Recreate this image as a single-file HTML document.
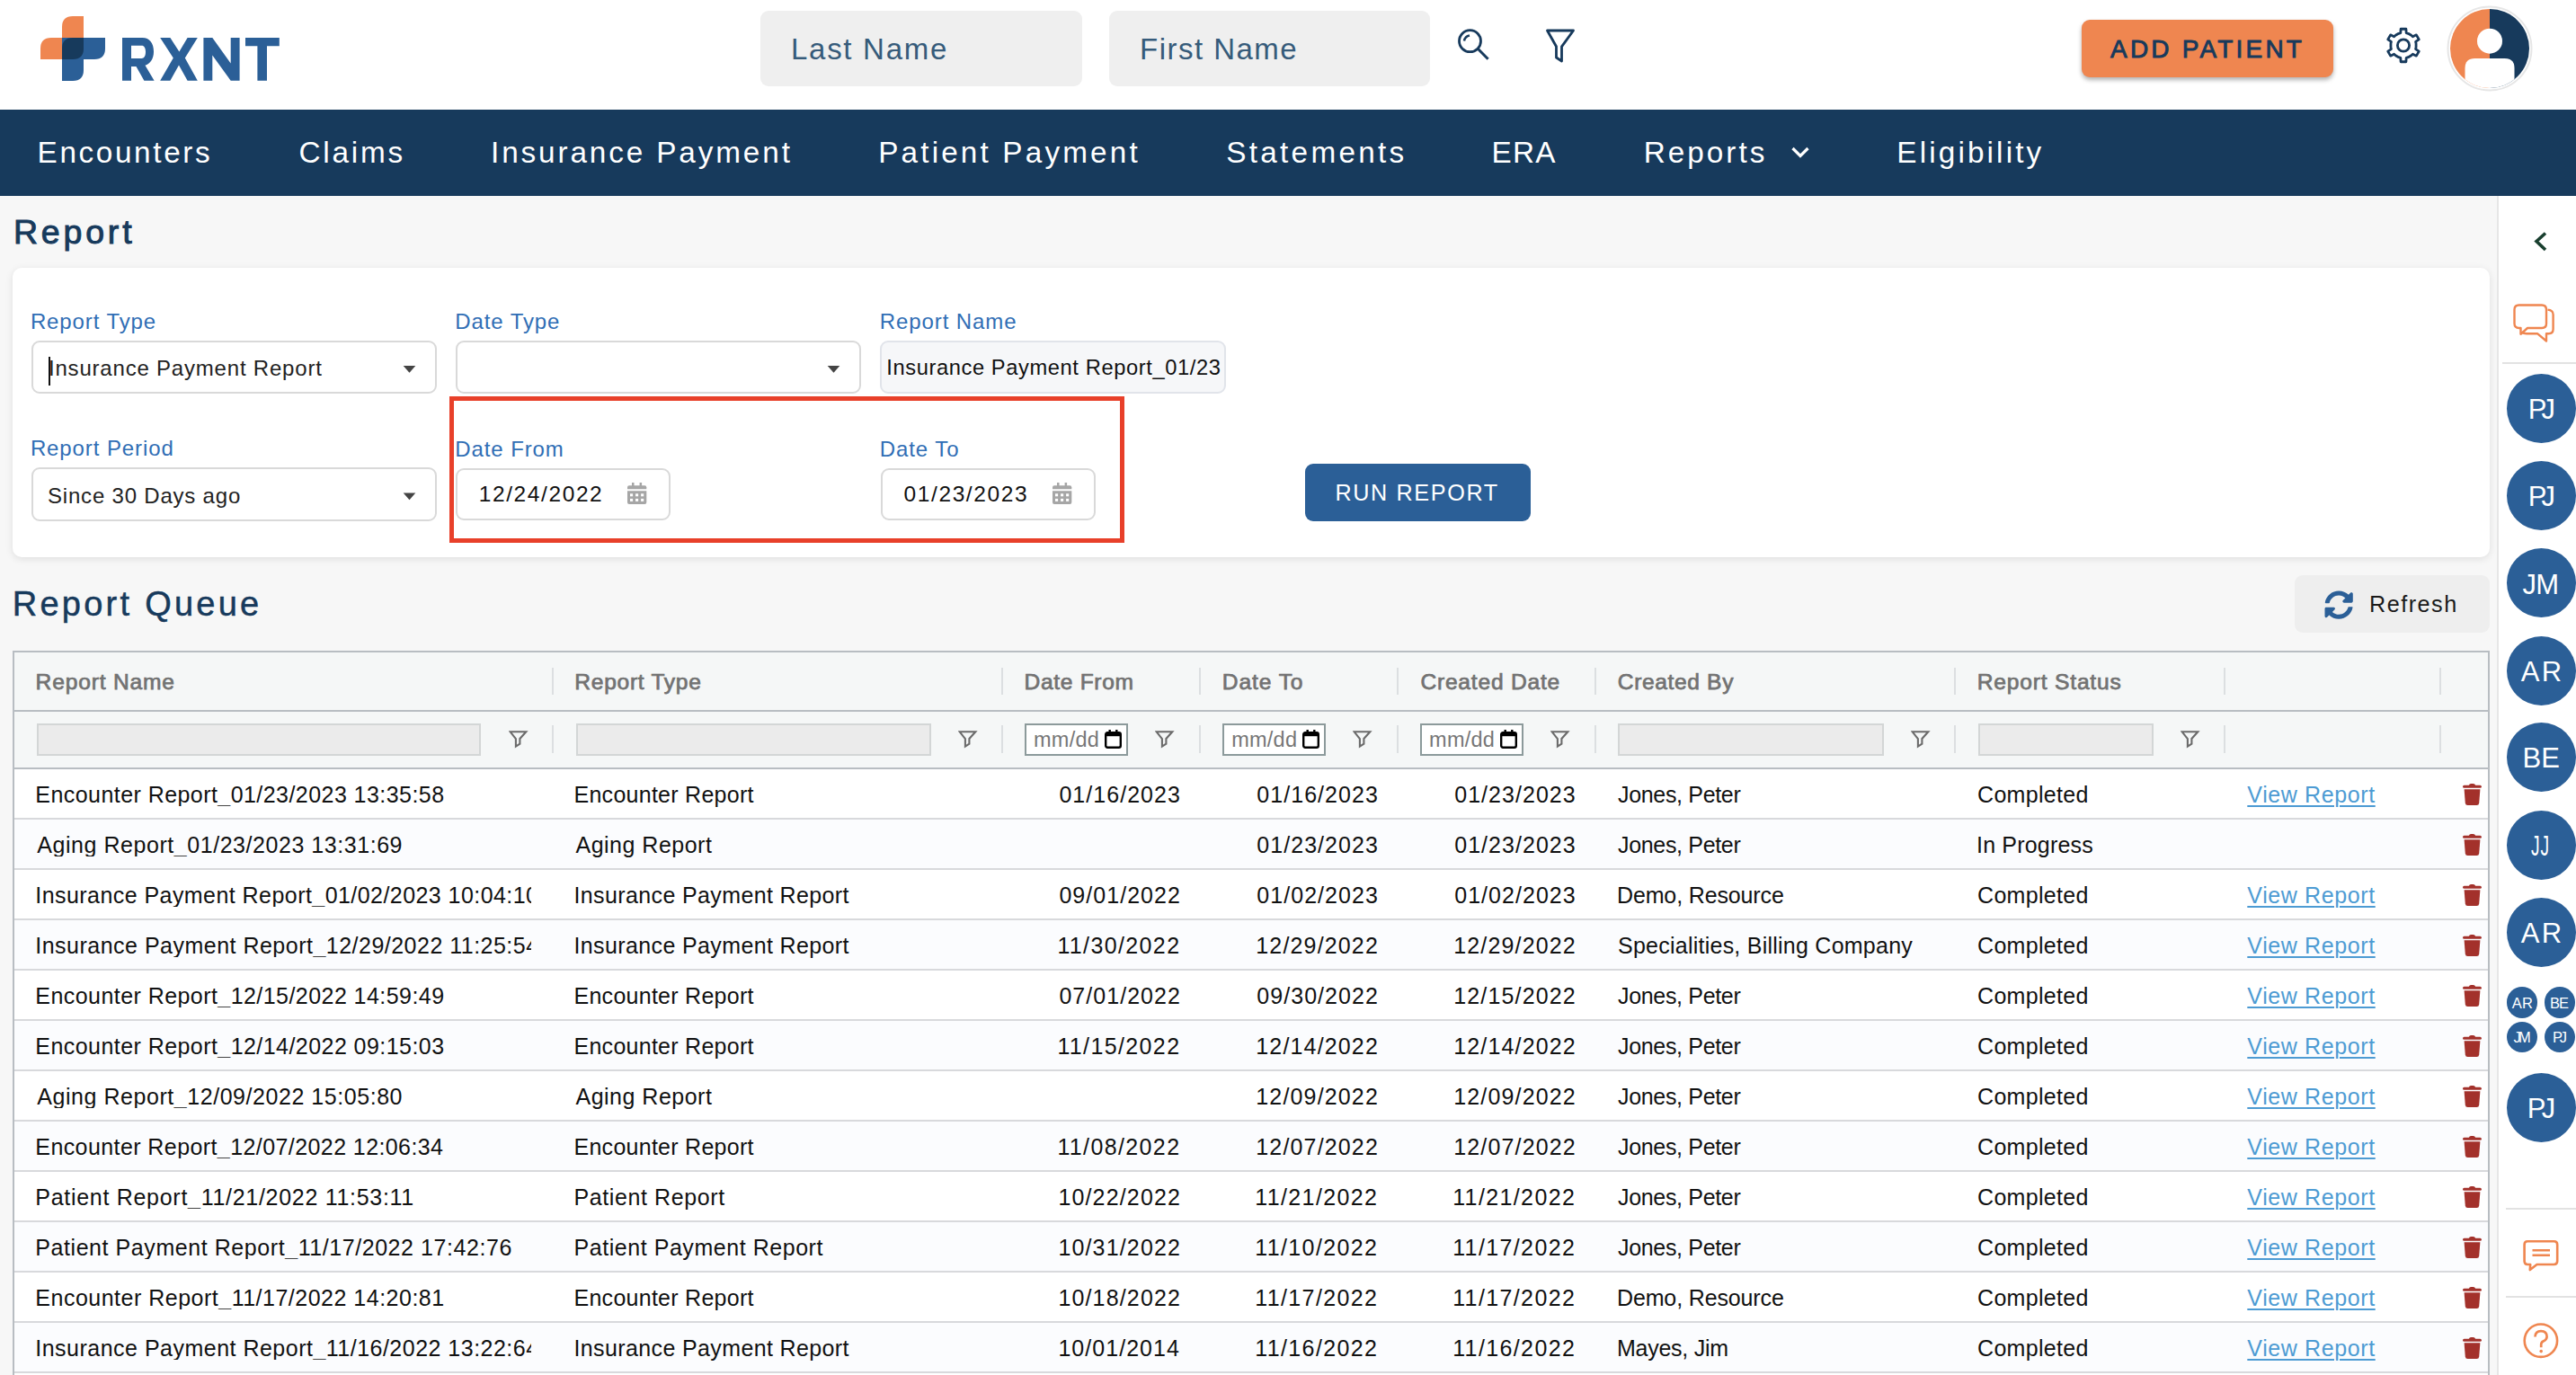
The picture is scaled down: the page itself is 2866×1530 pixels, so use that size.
<!DOCTYPE html>
<html><head><meta charset="utf-8"><style>
html,body{margin:0;padding:0}
body{width:2866px;height:1530px;overflow:hidden;position:relative;background:#f7f7f7;font-family:"Liberation Sans", sans-serif}
.t{position:absolute;white-space:pre;font-family:"Liberation Sans", sans-serif}
</style></head><body>
<div style="position:absolute;left:0px;top:0px;width:2866px;height:122px;background:#fff"></div>
<div style="position:absolute;left:846px;top:12px;width:358px;height:84px;background:#efefef;border-radius:9px"></div>
<div style="position:absolute;left:1234px;top:12px;width:357px;height:84px;background:#efefef;border-radius:9px"></div>
<div style="position:absolute;left:2316px;top:22px;width:280px;height:64px;background:#ef8650;border-radius:9px;box-shadow:0 3px 5px rgba(0,0,0,0.3)"></div>
<div style="position:absolute;left:0px;top:122px;width:2866px;height:96px;background:#173a5c"></div>
<div style="position:absolute;left:2778px;top:218px;width:88px;height:1312px;background:#fff;border-left:2px solid #e6e6e6;box-sizing:border-box"></div>
<div style="position:absolute;left:2784px;top:403px;width:82px;height:2px;background:#e2e2e2"></div>
<div style="position:absolute;left:2788px;top:1344px;width:78px;height:2px;background:#e2e2e2"></div>
<div style="position:absolute;left:2788px;top:1442px;width:78px;height:2px;background:#e2e2e2"></div>
<div style="position:absolute;left:14px;top:298px;width:2756px;height:322px;background:#fff;border-radius:10px;box-shadow:0 2px 9px rgba(0,0,0,0.1)"></div>
<div style="position:absolute;left:35px;top:379px;width:451px;height:59px;background:#fff;border:2px solid #d9d9d9;border-radius:9px;box-sizing:border-box"></div>
<div style="position:absolute;left:507px;top:379px;width:451px;height:59px;background:#fff;border:2px solid #d9d9d9;border-radius:9px;box-sizing:border-box"></div>
<div style="position:absolute;left:979.3px;top:378.5px;width:384.29999999999995px;height:59.0px;background:#f6f7f9;border:2px solid #e1e4ea;border-radius:9px;box-sizing:border-box"></div>
<div style="position:absolute;left:34.5px;top:519.5px;width:451.5px;height:60.0px;background:#fff;border:2px solid #d9d9d9;border-radius:9px;box-sizing:border-box"></div>
<div style="position:absolute;left:507px;top:520.5px;width:239px;height:58.799999999999955px;background:#fff;border:2px solid #d9d9d9;border-radius:9px;box-sizing:border-box"></div>
<div style="position:absolute;left:980px;top:520.5px;width:238.5999999999999px;height:58.799999999999955px;background:#fff;border:2px solid #d9d9d9;border-radius:9px;box-sizing:border-box"></div>
<div style="position:absolute;left:54px;top:397px;width:2px;height:32px;background:#111"></div>
<div style="position:absolute;left:500px;top:440.5px;width:751.2px;height:163.29999999999995px;border:5.2px solid #e8402a;box-sizing:border-box"></div>
<div style="position:absolute;left:1452px;top:516px;width:251px;height:64px;background:#2b5f97;border-radius:9px"></div>
<div style="position:absolute;left:2553px;top:640px;width:217px;height:64px;background:#eeeeee;border-radius:9px"></div>
<div style="position:absolute;left:14px;top:724px;width:2756px;height:876px;background:#fff;border:2px solid #b8bdc2;box-sizing:border-box"></div>
<div style="position:absolute;left:16px;top:726px;width:2752px;height:129px;background:#f5f7f7"></div>
<div style="position:absolute;left:16px;top:790px;width:2752px;height:2px;background:#b8bdc2"></div>
<div style="position:absolute;left:16px;top:854px;width:2752px;height:2px;background:#b8bdc2"></div>
<div style="position:absolute;left:16px;top:910px;width:2752px;height:2px;background:#d8d9dc"></div>
<div style="position:absolute;left:16px;top:912px;width:2752px;height:55px;background:#fbfcfe"></div>
<div style="position:absolute;left:16px;top:966px;width:2752px;height:2px;background:#d8d9dc"></div>
<div style="position:absolute;left:16px;top:1022px;width:2752px;height:2px;background:#d8d9dc"></div>
<div style="position:absolute;left:16px;top:1024px;width:2752px;height:55px;background:#fbfcfe"></div>
<div style="position:absolute;left:16px;top:1078px;width:2752px;height:2px;background:#d8d9dc"></div>
<div style="position:absolute;left:16px;top:1134px;width:2752px;height:2px;background:#d8d9dc"></div>
<div style="position:absolute;left:16px;top:1136px;width:2752px;height:55px;background:#fbfcfe"></div>
<div style="position:absolute;left:16px;top:1190px;width:2752px;height:2px;background:#d8d9dc"></div>
<div style="position:absolute;left:16px;top:1246px;width:2752px;height:2px;background:#d8d9dc"></div>
<div style="position:absolute;left:16px;top:1248px;width:2752px;height:55px;background:#fbfcfe"></div>
<div style="position:absolute;left:16px;top:1302px;width:2752px;height:2px;background:#d8d9dc"></div>
<div style="position:absolute;left:16px;top:1358px;width:2752px;height:2px;background:#d8d9dc"></div>
<div style="position:absolute;left:16px;top:1360px;width:2752px;height:55px;background:#fbfcfe"></div>
<div style="position:absolute;left:16px;top:1414px;width:2752px;height:2px;background:#d8d9dc"></div>
<div style="position:absolute;left:16px;top:1470px;width:2752px;height:2px;background:#d8d9dc"></div>
<div style="position:absolute;left:16px;top:1472px;width:2752px;height:55px;background:#fbfcfe"></div>
<div style="position:absolute;left:16px;top:1526px;width:2752px;height:2px;background:#d8d9dc"></div>
<div style="position:absolute;left:614px;top:743px;width:2px;height:30px;background:#dcdfe1"></div>
<div style="position:absolute;left:614px;top:807px;width:2px;height:31px;background:#dcdfe1"></div>
<div style="position:absolute;left:1114px;top:743px;width:2px;height:30px;background:#dcdfe1"></div>
<div style="position:absolute;left:1114px;top:807px;width:2px;height:31px;background:#dcdfe1"></div>
<div style="position:absolute;left:1334px;top:743px;width:2px;height:30px;background:#dcdfe1"></div>
<div style="position:absolute;left:1334px;top:807px;width:2px;height:31px;background:#dcdfe1"></div>
<div style="position:absolute;left:1554px;top:743px;width:2px;height:30px;background:#dcdfe1"></div>
<div style="position:absolute;left:1554px;top:807px;width:2px;height:31px;background:#dcdfe1"></div>
<div style="position:absolute;left:1774px;top:743px;width:2px;height:30px;background:#dcdfe1"></div>
<div style="position:absolute;left:1774px;top:807px;width:2px;height:31px;background:#dcdfe1"></div>
<div style="position:absolute;left:2174px;top:743px;width:2px;height:30px;background:#dcdfe1"></div>
<div style="position:absolute;left:2174px;top:807px;width:2px;height:31px;background:#dcdfe1"></div>
<div style="position:absolute;left:2474px;top:743px;width:2px;height:30px;background:#dcdfe1"></div>
<div style="position:absolute;left:2474px;top:807px;width:2px;height:31px;background:#dcdfe1"></div>
<div style="position:absolute;left:2714px;top:743px;width:2px;height:30px;background:#dcdfe1"></div>
<div style="position:absolute;left:2714px;top:807px;width:2px;height:31px;background:#dcdfe1"></div>
<div style="position:absolute;left:40.8px;top:805px;width:494.7px;height:36px;background:#ebebeb;border:2px solid #d3d6d6;box-sizing:border-box"></div>
<div style="position:absolute;left:640.5px;top:805px;width:395.0999999999999px;height:36px;background:#ebebeb;border:2px solid #d3d6d6;box-sizing:border-box"></div>
<div style="position:absolute;left:1800.3px;top:805px;width:295.39999999999986px;height:36px;background:#ebebeb;border:2px solid #d3d6d6;box-sizing:border-box"></div>
<div style="position:absolute;left:2200.5px;top:805px;width:195.0px;height:36px;background:#ebebeb;border:2px solid #d3d6d6;box-sizing:border-box"></div>
<div style="position:absolute;left:1140px;top:805px;width:115.20000000000005px;height:36px;background:#fff;border:2px solid #8c9a9b;box-sizing:border-box"></div>
<div style="position:absolute;left:1360.2px;top:805px;width:115.20000000000005px;height:36px;background:#fff;border:2px solid #8c9a9b;box-sizing:border-box"></div>
<div style="position:absolute;left:1580.1px;top:805px;width:115.20000000000005px;height:36px;background:#fff;border:2px solid #8c9a9b;box-sizing:border-box"></div>
<svg style="position:absolute;left:0;top:0" width="340" height="110" viewBox="0 0 340 110">
<path d="M69,30 Q69,18 81,18 L93,18 L93,66 L45,66 L45,54 Q45,42 57,42 L69,42 Z" fill="#ef8650"/>
<path d="M69,42 L117,42 L117,54 Q117,66 105,66 L93,66 L93,78 Q93,90 81,90 L69,90 Z" fill="#2b5f97"/>
<path d="M81,42 L93,42 L93,54 Q93,66 81,66 L69,66 L69,54 Q69,42 81,42 Z" fill="#173a5c"/>
<path fill-rule="evenodd" fill="#2b5f97" d="M136,42 L158.5,42 C166.5,42 171,48 171,57.5 C171,65.5 167,71 161.5,72.8 L171.6,89.8 L160.4,89.8 L151.5,74 L146,74 L146,89.8 L136,89.8 Z M146,50.8 L157.5,50.8 C160.5,50.8 162,53.5 162,57.8 C162,62 160.5,65 157.5,65 L146,65 Z"/>
<path fill="#2b5f97" d="M178.2,42 L189.4,42 L199.4,57.5 L208.6,42 L219.8,42 L205.8,64.5 L219.8,89.8 L208.6,89.8 L199,72.5 L189.4,89.8 L178.2,89.8 L192.8,64.5 Z"/>
<path fill="#2b5f97" d="M226.4,42 L236.3,42 L256.7,70.5 L256.7,42 L266.6,42 L266.6,89.8 L256.7,89.8 L236.3,61.5 L236.3,89.8 L226.4,89.8 Z"/>
<path fill="#2b5f97" d="M273,42 L310.8,42 L310.8,51.2 L297,51.2 L297,89.8 L286.4,89.8 L286.4,51.2 L273,51.2 Z"/>
</svg><svg style="position:absolute;left:1600px;top:20px" width="180" height="70" viewBox="0 0 180 70">
<circle cx="35.5" cy="25.7" r="12" fill="none" stroke="#173a5c" stroke-width="2.8"/>
<path d="M44.5,34.5 L55.6,45.8" stroke="#173a5c" stroke-width="3" fill="none"/>
<path d="M29,25.5 A7.5,7.5 0 0 1 35,19.5" stroke="#173a5c" stroke-width="2.5" fill="none"/>
<path d="M121.5,14 L150.5,14 L137.5,31.8 L137.5,48 L131.5,44 L131.5,31.8 Z" fill="none" stroke="#173a5c" stroke-width="2.8" stroke-linejoin="round"/>
</svg><svg style="position:absolute;left:2650px;top:26px" width="48" height="48" viewBox="0 0 48 48">
<path d="M18.68,11.33 L20.81,10.66 L21.11,6.23 L26.89,6.23 L27.19,10.66 L29.32,11.33 L32.74,13.31 L34.39,14.82 L38.38,12.86 L41.27,17.87 L37.58,20.35 L38.06,22.52 L38.06,26.48 L37.58,28.65 L41.27,31.13 L38.38,36.14 L34.39,34.18 L32.74,35.69 L29.32,37.67 L27.19,38.34 L26.89,42.77 L21.11,42.77 L20.81,38.34 L18.68,37.67 L15.26,35.69 L13.61,34.18 L9.62,36.14 L6.73,31.13 L10.42,28.65 L9.94,26.48 L9.94,22.52 L10.42,20.35 L6.73,17.87 L9.62,12.86 L13.61,14.82 L15.26,13.31 Z" fill="none" stroke="#173a5c" stroke-width="2.8" stroke-linejoin="round"/>
<circle cx="24" cy="24.5" r="6.6" fill="none" stroke="#173a5c" stroke-width="2.8"/>
</svg><svg style="position:absolute;left:2720px;top:4px" width="100" height="100" viewBox="0 0 100 100">
<defs><clipPath id="av"><circle cx="50" cy="50" r="44"/></clipPath></defs>
<circle cx="50" cy="50" r="46.5" fill="none" stroke="#e6e6e6" stroke-width="2"/>
<g clip-path="url(#av)">
<rect x="0" y="0" width="50" height="100" fill="#ef8650"/>
<rect x="50" y="0" width="50" height="100" fill="#173a5c"/>
<circle cx="50" cy="41.7" r="14" fill="#fff"/>
<path d="M22.5,100 L22.5,72 Q22.5,61 33.5,61 L66.5,61 Q77.5,61 77.5,72 L77.5,100 Z" fill="#fff"/>
</g></svg><svg style="position:absolute;left:1990px;top:160px" width="28" height="22" viewBox="0 0 28 22">
<path d="M4.5,5 L13,13.5 L21.5,5" fill="none" stroke="#fff" stroke-width="3.2"/>
</svg><svg style="position:absolute;left:2810px;top:250px" width="30" height="36" viewBox="0 0 30 36">
<path d="M22,9.5 L12,18.5 L22,28" fill="none" stroke="#193f2f" stroke-width="3.6"/>
</svg><svg style="position:absolute;left:2790px;top:332px" width="60" height="56" viewBox="0 0 60 56">
<path d="M12.5,7.45 L38,7.45 Q43,7.45 43,12.45 L43,28 Q43,33 38,33 L22,33 L14.5,39.8 L14.5,33 L12.5,33 Q7.5,33 7.5,28 L7.5,12.45 Q7.5,7.45 12.5,7.45 Z" fill="none" stroke="#ef8650" stroke-width="2.4" stroke-linejoin="round"/>
<path d="M44.5,12.6 Q50.6,13 50.6,18 L50.6,34.2 Q50.6,39.2 45.6,39.2 L43,39.2 L43,47.5 L33,39.2 L21,39.2 Q17.5,39.2 15.5,37.5" fill="none" stroke="#ef8650" stroke-width="2.4" stroke-linejoin="round"/>
</svg><svg style="position:absolute;left:2800px;top:1372px" width="54" height="48" viewBox="0 0 54 48">
<path d="M12,9.3 L41.5,9.3 Q45.2,9.3 45.2,13 L45.2,31.3 Q45.2,35 41.5,35 L22.5,35 L14.8,41 L15.2,35 L12,35 Q8.6,35 8.6,31.3 L8.6,13 Q8.6,9.3 12,9.3 Z" fill="none" stroke="#ef8650" stroke-width="2.6" stroke-linejoin="round"/>
<path d="M17.5,19.2 L37,19.2 M17.5,24.7 L37,24.7" stroke="#ef8650" stroke-width="2.6"/>
</svg><svg style="position:absolute;left:2800px;top:1465px" width="54" height="54" viewBox="0 0 54 54">
<circle cx="26.9" cy="26.7" r="18.2" fill="none" stroke="#ef8650" stroke-width="2.6"/>
<path d="M20.5,22.5 Q20.8,16.2 27,16.2 Q33.6,16.2 33.6,22.5 Q33.6,25.5 29.5,27.5 Q27.2,28.6 27.2,31 L27.2,34.2" fill="none" stroke="#ef8650" stroke-width="2.7"/>
<circle cx="27.2" cy="38.6" r="1.8" fill="#ef8650"/>
</svg><svg style="position:absolute;left:0;top:0" width="1000" height="600" viewBox="0 0 1000 600"><path d="M448.7,407 L462.3,407 L455.5,414.7 Z" fill="#444"/><path d="M920.7,407 L934.3,407 L927.5,414.7 Z" fill="#444"/><path d="M448.7,548.5 L462.3,548.5 L455.5,556.2 Z" fill="#444"/></svg><svg style="position:absolute;left:698.3px;top:537px" width="22" height="25" viewBox="0 0 22 25"><rect x="5" y="0" width="2.5" height="5" fill="#a6a6a6"/><rect x="13.6" y="0" width="2.5" height="5" fill="#a6a6a6"/><path d="M0,5.2 Q0,3.2 2,3.2 L19.3,3.2 Q21.3,3.2 21.3,5.2 L21.3,7.3 L0,7.3 Z" fill="#a6a6a6"/><path d="M0,9.3 L21.3,9.3 L21.3,22 Q21.3,24 19.3,24 L2,24 Q0,24 0,22 Z" fill="#a6a6a6"/><rect x="3.0" y="12.3" width="3.1" height="3" fill="#fff"/><rect x="9.05" y="12.3" width="3.1" height="3" fill="#fff"/><rect x="15.1" y="12.3" width="3.1" height="3" fill="#fff"/><rect x="3.0" y="17.9" width="3.1" height="3" fill="#fff"/><rect x="9.05" y="17.9" width="3.1" height="3" fill="#fff"/><rect x="15.1" y="17.9" width="3.1" height="3" fill="#fff"/></svg><svg style="position:absolute;left:1170.8px;top:537px" width="22" height="25" viewBox="0 0 22 25"><rect x="5" y="0" width="2.5" height="5" fill="#a6a6a6"/><rect x="13.6" y="0" width="2.5" height="5" fill="#a6a6a6"/><path d="M0,5.2 Q0,3.2 2,3.2 L19.3,3.2 Q21.3,3.2 21.3,5.2 L21.3,7.3 L0,7.3 Z" fill="#a6a6a6"/><path d="M0,9.3 L21.3,9.3 L21.3,22 Q21.3,24 19.3,24 L2,24 Q0,24 0,22 Z" fill="#a6a6a6"/><rect x="3.0" y="12.3" width="3.1" height="3" fill="#fff"/><rect x="9.05" y="12.3" width="3.1" height="3" fill="#fff"/><rect x="15.1" y="12.3" width="3.1" height="3" fill="#fff"/><rect x="3.0" y="17.9" width="3.1" height="3" fill="#fff"/><rect x="9.05" y="17.9" width="3.1" height="3" fill="#fff"/><rect x="15.1" y="17.9" width="3.1" height="3" fill="#fff"/></svg><svg style="position:absolute;left:1228.7px;top:812px" width="19" height="21" viewBox="0 0 19 21"><rect x="1.2" y="3.2" width="16.6" height="16.6" rx="2" fill="none" stroke="#000" stroke-width="2.4"/><rect x="1.2" y="3.2" width="16.6" height="4" fill="#000"/><rect x="4.5" y="0" width="2.4" height="4" fill="#000"/><rect x="12.1" y="0" width="2.4" height="4" fill="#000"/></svg><svg style="position:absolute;left:1448.9px;top:812px" width="19" height="21" viewBox="0 0 19 21"><rect x="1.2" y="3.2" width="16.6" height="16.6" rx="2" fill="none" stroke="#000" stroke-width="2.4"/><rect x="1.2" y="3.2" width="16.6" height="4" fill="#000"/><rect x="4.5" y="0" width="2.4" height="4" fill="#000"/><rect x="12.1" y="0" width="2.4" height="4" fill="#000"/></svg><svg style="position:absolute;left:1668.8px;top:812px" width="19" height="21" viewBox="0 0 19 21"><rect x="1.2" y="3.2" width="16.6" height="16.6" rx="2" fill="none" stroke="#000" stroke-width="2.4"/><rect x="1.2" y="3.2" width="16.6" height="4" fill="#000"/><rect x="4.5" y="0" width="2.4" height="4" fill="#000"/><rect x="12.1" y="0" width="2.4" height="4" fill="#000"/></svg><svg style="position:absolute;left:565.5px;top:812px" width="22" height="22" viewBox="0 0 22 22"><path d="M1.7,2.3 L19.3,2.3 L12.4,10 L12.4,15.6 L7.9,18.6 L7.9,10 Z" fill="none" stroke="#6b6b6b" stroke-width="2.1" stroke-linejoin="miter" stroke-miterlimit="3"/></svg><svg style="position:absolute;left:1065.5px;top:812px" width="22" height="22" viewBox="0 0 22 22"><path d="M1.7,2.3 L19.3,2.3 L12.4,10 L12.4,15.6 L7.9,18.6 L7.9,10 Z" fill="none" stroke="#6b6b6b" stroke-width="2.1" stroke-linejoin="miter" stroke-miterlimit="3"/></svg><svg style="position:absolute;left:1285.0px;top:812px" width="22" height="22" viewBox="0 0 22 22"><path d="M1.7,2.3 L19.3,2.3 L12.4,10 L12.4,15.6 L7.9,18.6 L7.9,10 Z" fill="none" stroke="#6b6b6b" stroke-width="2.1" stroke-linejoin="miter" stroke-miterlimit="3"/></svg><svg style="position:absolute;left:1505.0px;top:812px" width="22" height="22" viewBox="0 0 22 22"><path d="M1.7,2.3 L19.3,2.3 L12.4,10 L12.4,15.6 L7.9,18.6 L7.9,10 Z" fill="none" stroke="#6b6b6b" stroke-width="2.1" stroke-linejoin="miter" stroke-miterlimit="3"/></svg><svg style="position:absolute;left:1725.0px;top:812px" width="22" height="22" viewBox="0 0 22 22"><path d="M1.7,2.3 L19.3,2.3 L12.4,10 L12.4,15.6 L7.9,18.6 L7.9,10 Z" fill="none" stroke="#6b6b6b" stroke-width="2.1" stroke-linejoin="miter" stroke-miterlimit="3"/></svg><svg style="position:absolute;left:2125.5px;top:812px" width="22" height="22" viewBox="0 0 22 22"><path d="M1.7,2.3 L19.3,2.3 L12.4,10 L12.4,15.6 L7.9,18.6 L7.9,10 Z" fill="none" stroke="#6b6b6b" stroke-width="2.1" stroke-linejoin="miter" stroke-miterlimit="3"/></svg><svg style="position:absolute;left:2425.5px;top:812px" width="22" height="22" viewBox="0 0 22 22"><path d="M1.7,2.3 L19.3,2.3 L12.4,10 L12.4,15.6 L7.9,18.6 L7.9,10 Z" fill="none" stroke="#6b6b6b" stroke-width="2.1" stroke-linejoin="miter" stroke-miterlimit="3"/></svg><svg style="position:absolute;left:2740px;top:871.8px" width="22" height="25" viewBox="0 0 22 25"><path d="M6.6,2.2 Q7.4,0.1 9.2,0.1 L11.7,0.1 Q13.5,0.1 14.3,2.2 Z" fill="#a3312b"/><rect x="0" y="1.7" width="20.9" height="3.1" rx="1.5" fill="#a3312b"/><path d="M1.6,6.3 L19.4,6.3 L18.2,21.5 Q18,24 15.5,24 L5.5,24 Q3,24 2.8,21.5 Z" fill="#a3312b"/></svg><svg style="position:absolute;left:2740px;top:927.8px" width="22" height="25" viewBox="0 0 22 25"><path d="M6.6,2.2 Q7.4,0.1 9.2,0.1 L11.7,0.1 Q13.5,0.1 14.3,2.2 Z" fill="#a3312b"/><rect x="0" y="1.7" width="20.9" height="3.1" rx="1.5" fill="#a3312b"/><path d="M1.6,6.3 L19.4,6.3 L18.2,21.5 Q18,24 15.5,24 L5.5,24 Q3,24 2.8,21.5 Z" fill="#a3312b"/></svg><svg style="position:absolute;left:2740px;top:983.8px" width="22" height="25" viewBox="0 0 22 25"><path d="M6.6,2.2 Q7.4,0.1 9.2,0.1 L11.7,0.1 Q13.5,0.1 14.3,2.2 Z" fill="#a3312b"/><rect x="0" y="1.7" width="20.9" height="3.1" rx="1.5" fill="#a3312b"/><path d="M1.6,6.3 L19.4,6.3 L18.2,21.5 Q18,24 15.5,24 L5.5,24 Q3,24 2.8,21.5 Z" fill="#a3312b"/></svg><svg style="position:absolute;left:2740px;top:1039.8px" width="22" height="25" viewBox="0 0 22 25"><path d="M6.6,2.2 Q7.4,0.1 9.2,0.1 L11.7,0.1 Q13.5,0.1 14.3,2.2 Z" fill="#a3312b"/><rect x="0" y="1.7" width="20.9" height="3.1" rx="1.5" fill="#a3312b"/><path d="M1.6,6.3 L19.4,6.3 L18.2,21.5 Q18,24 15.5,24 L5.5,24 Q3,24 2.8,21.5 Z" fill="#a3312b"/></svg><svg style="position:absolute;left:2740px;top:1095.8px" width="22" height="25" viewBox="0 0 22 25"><path d="M6.6,2.2 Q7.4,0.1 9.2,0.1 L11.7,0.1 Q13.5,0.1 14.3,2.2 Z" fill="#a3312b"/><rect x="0" y="1.7" width="20.9" height="3.1" rx="1.5" fill="#a3312b"/><path d="M1.6,6.3 L19.4,6.3 L18.2,21.5 Q18,24 15.5,24 L5.5,24 Q3,24 2.8,21.5 Z" fill="#a3312b"/></svg><svg style="position:absolute;left:2740px;top:1151.8px" width="22" height="25" viewBox="0 0 22 25"><path d="M6.6,2.2 Q7.4,0.1 9.2,0.1 L11.7,0.1 Q13.5,0.1 14.3,2.2 Z" fill="#a3312b"/><rect x="0" y="1.7" width="20.9" height="3.1" rx="1.5" fill="#a3312b"/><path d="M1.6,6.3 L19.4,6.3 L18.2,21.5 Q18,24 15.5,24 L5.5,24 Q3,24 2.8,21.5 Z" fill="#a3312b"/></svg><svg style="position:absolute;left:2740px;top:1207.8px" width="22" height="25" viewBox="0 0 22 25"><path d="M6.6,2.2 Q7.4,0.1 9.2,0.1 L11.7,0.1 Q13.5,0.1 14.3,2.2 Z" fill="#a3312b"/><rect x="0" y="1.7" width="20.9" height="3.1" rx="1.5" fill="#a3312b"/><path d="M1.6,6.3 L19.4,6.3 L18.2,21.5 Q18,24 15.5,24 L5.5,24 Q3,24 2.8,21.5 Z" fill="#a3312b"/></svg><svg style="position:absolute;left:2740px;top:1263.8px" width="22" height="25" viewBox="0 0 22 25"><path d="M6.6,2.2 Q7.4,0.1 9.2,0.1 L11.7,0.1 Q13.5,0.1 14.3,2.2 Z" fill="#a3312b"/><rect x="0" y="1.7" width="20.9" height="3.1" rx="1.5" fill="#a3312b"/><path d="M1.6,6.3 L19.4,6.3 L18.2,21.5 Q18,24 15.5,24 L5.5,24 Q3,24 2.8,21.5 Z" fill="#a3312b"/></svg><svg style="position:absolute;left:2740px;top:1319.8px" width="22" height="25" viewBox="0 0 22 25"><path d="M6.6,2.2 Q7.4,0.1 9.2,0.1 L11.7,0.1 Q13.5,0.1 14.3,2.2 Z" fill="#a3312b"/><rect x="0" y="1.7" width="20.9" height="3.1" rx="1.5" fill="#a3312b"/><path d="M1.6,6.3 L19.4,6.3 L18.2,21.5 Q18,24 15.5,24 L5.5,24 Q3,24 2.8,21.5 Z" fill="#a3312b"/></svg><svg style="position:absolute;left:2740px;top:1375.8px" width="22" height="25" viewBox="0 0 22 25"><path d="M6.6,2.2 Q7.4,0.1 9.2,0.1 L11.7,0.1 Q13.5,0.1 14.3,2.2 Z" fill="#a3312b"/><rect x="0" y="1.7" width="20.9" height="3.1" rx="1.5" fill="#a3312b"/><path d="M1.6,6.3 L19.4,6.3 L18.2,21.5 Q18,24 15.5,24 L5.5,24 Q3,24 2.8,21.5 Z" fill="#a3312b"/></svg><svg style="position:absolute;left:2740px;top:1431.8px" width="22" height="25" viewBox="0 0 22 25"><path d="M6.6,2.2 Q7.4,0.1 9.2,0.1 L11.7,0.1 Q13.5,0.1 14.3,2.2 Z" fill="#a3312b"/><rect x="0" y="1.7" width="20.9" height="3.1" rx="1.5" fill="#a3312b"/><path d="M1.6,6.3 L19.4,6.3 L18.2,21.5 Q18,24 15.5,24 L5.5,24 Q3,24 2.8,21.5 Z" fill="#a3312b"/></svg><svg style="position:absolute;left:2740px;top:1487.8px" width="22" height="25" viewBox="0 0 22 25"><path d="M6.6,2.2 Q7.4,0.1 9.2,0.1 L11.7,0.1 Q13.5,0.1 14.3,2.2 Z" fill="#a3312b"/><rect x="0" y="1.7" width="20.9" height="3.1" rx="1.5" fill="#a3312b"/><path d="M1.6,6.3 L19.4,6.3 L18.2,21.5 Q18,24 15.5,24 L5.5,24 Q3,24 2.8,21.5 Z" fill="#a3312b"/></svg><svg style="position:absolute;left:2585.7px;top:656.5px" width="32.3" height="32.3" viewBox="0 0 512 512">
<path fill="#2b5f97" d="M370.72 133.28C339.458 104.008 298.888 87.962 255.848 88c-77.458.068-144.328 53.178-162.791 126.85-1.344 5.363-6.122 9.15-11.651 9.15H24.103c-7.498 0-13.194-6.807-11.807-14.176C33.933 94.924 134.813 8 256 8c66.448 0 126.791 26.136 171.315 68.685L463.03 40.97C478.149 25.851 504 36.559 504 57.941V192c0 13.255-10.745 24-24 24H345.941c-21.382 0-32.090-25.851-16.971-40.971l41.75-41.749zM32 296h134.059c21.382 0 32.090 25.851 16.971 40.971l-41.75 41.750c31.262 29.273 71.835 45.319 114.876 45.280 77.418-.07 144.315-53.144 162.787-126.849 1.344-5.363 6.122-9.150 11.651-9.150h57.304c7.498 0 13.194 6.807 11.807 14.176C478.067 417.076 377.187 504 256 504c-66.448 0-126.791-26.136-171.315-68.685L48.970 471.030C33.851 486.149 8 475.441 8 454.059V320c0-13.255 10.745-24 24-24z"/>
</svg>
<div style="position:absolute;left:2789.0px;top:415.8px;width:77.0px;height:77.0px;border-radius:50%;background:#2b5f97"></div><div style="position:absolute;left:2789.0px;top:512.9px;width:77.0px;height:77.0px;border-radius:50%;background:#2b5f97"></div><div style="position:absolute;left:2789.0px;top:610.3px;width:77.0px;height:77.0px;border-radius:50%;background:#2b5f97"></div><div style="position:absolute;left:2789.0px;top:707.5px;width:77.0px;height:77.0px;border-radius:50%;background:#2b5f97"></div><div style="position:absolute;left:2789.0px;top:804.2px;width:77.0px;height:77.0px;border-radius:50%;background:#2b5f97"></div><div style="position:absolute;left:2789.0px;top:902.0px;width:77.0px;height:77.0px;border-radius:50%;background:#2b5f97"></div><div style="position:absolute;left:2789.0px;top:999.2px;width:77.0px;height:77.0px;border-radius:50%;background:#2b5f97"></div><div style="position:absolute;left:2789.0px;top:1193.7px;width:77.0px;height:77.0px;border-radius:50%;background:#2b5f97"></div><div style="position:absolute;left:2788.8px;top:1098.2px;width:34.4px;height:34.4px;border-radius:50%;background:#2b5f97"></div><div style="position:absolute;left:2830.8px;top:1098.2px;width:34.4px;height:34.4px;border-radius:50%;background:#2b5f97"></div><div style="position:absolute;left:2788.8px;top:1136.8999999999999px;width:34.4px;height:34.4px;border-radius:50%;background:#2b5f97"></div><div style="position:absolute;left:2830.8px;top:1136.8999999999999px;width:34.4px;height:34.4px;border-radius:50%;background:#2b5f97"></div>
<div class="t" style="left:880.00px;top:38.00px;font-size:33px;line-height:33px;font-weight:400;letter-spacing:1.713px;color:#365b7a">Last Name</div>
<div class="t" style="left:1268.00px;top:38.00px;font-size:33px;line-height:33px;font-weight:400;letter-spacing:1.478px;color:#365b7a">First Name</div>
<div class="t" style="left:2348.00px;top:41.00px;font-size:28px;line-height:28px;font-weight:400;letter-spacing:3.200px;color:#173a5c;-webkit-text-stroke:0.9px #173a5c">ADD PATIENT</div>
<div class="t" style="left:41.60px;top:152.80px;font-size:33.3px;line-height:33.3px;font-weight:400;letter-spacing:2.622px;color:#ffffff">Encounters</div>
<div class="t" style="left:332.50px;top:152.80px;font-size:33.3px;line-height:33.3px;font-weight:400;letter-spacing:2.800px;color:#ffffff">Claims</div>
<div class="t" style="left:546.00px;top:152.80px;font-size:33.3px;line-height:33.3px;font-weight:400;letter-spacing:2.875px;color:#ffffff">Insurance Payment</div>
<div class="t" style="left:977.20px;top:152.80px;font-size:33.3px;line-height:33.3px;font-weight:400;letter-spacing:3.157px;color:#ffffff">Patient Payment</div>
<div class="t" style="left:1364.30px;top:152.80px;font-size:33.3px;line-height:33.3px;font-weight:400;letter-spacing:3.267px;color:#ffffff">Statements</div>
<div class="t" style="left:1659.60px;top:152.80px;font-size:33.3px;line-height:33.3px;font-weight:400;letter-spacing:1.200px;color:#ffffff">ERA</div>
<div class="t" style="left:1828.80px;top:152.80px;font-size:33.3px;line-height:33.3px;font-weight:400;letter-spacing:2.983px;color:#ffffff">Reports</div>
<div class="t" style="left:2110.30px;top:152.80px;font-size:33.3px;line-height:33.3px;font-weight:400;letter-spacing:3.140px;color:#ffffff">Eligibility</div>
<div class="t" style="left:14.90px;top:240.30px;font-size:37.5px;line-height:37.5px;font-weight:400;letter-spacing:3.820px;color:#173a5c;-webkit-text-stroke:1px #173a5c">Report</div>
<div class="t" style="left:13.80px;top:653.20px;font-size:38px;line-height:38px;font-weight:400;letter-spacing:3.245px;color:#173a5c;-webkit-text-stroke:0.5px #173a5c">Report Queue</div>
<div class="t" style="left:33.90px;top:345.70px;font-size:24px;line-height:24px;font-weight:400;letter-spacing:0.900px;color:#306eb5">Report Type</div>
<div class="t" style="left:506.30px;top:345.70px;font-size:24px;line-height:24px;font-weight:400;letter-spacing:0.900px;color:#306eb5">Date Type</div>
<div class="t" style="left:978.80px;top:345.70px;font-size:24px;line-height:24px;font-weight:400;letter-spacing:0.900px;color:#306eb5">Report Name</div>
<div class="t" style="left:33.90px;top:487.30px;font-size:24px;line-height:24px;font-weight:400;letter-spacing:0.900px;color:#306eb5">Report Period</div>
<div class="t" style="left:506.30px;top:488.30px;font-size:24px;line-height:24px;font-weight:400;letter-spacing:0.900px;color:#306eb5">Date From</div>
<div class="t" style="left:978.80px;top:488.30px;font-size:24px;line-height:24px;font-weight:400;letter-spacing:0.900px;color:#306eb5">Date To</div>
<div class="t" style="left:54.00px;top:398.00px;font-size:24px;line-height:24px;font-weight:400;letter-spacing:0.800px;color:#222">Insurance Payment Report</div>
<div class="t" style="left:53.00px;top:539.50px;font-size:24px;line-height:24px;font-weight:400;letter-spacing:0.800px;color:#222">Since 30 Days ago</div>
<div class="t" style="left:986.30px;top:397.80px;font-size:23.7px;line-height:23.7px;font-weight:400;letter-spacing:0.597px;color:#111">Insurance Payment Report_01/23</div>
<div class="t" style="left:532.80px;top:537.90px;font-size:24.5px;line-height:24.5px;font-weight:400;letter-spacing:1.589px;color:#111">12/24/2022</div>
<div class="t" style="left:1005.50px;top:537.90px;font-size:24.5px;line-height:24.5px;font-weight:400;letter-spacing:1.611px;color:#111">01/23/2023</div>
<div class="t" style="left:1485.50px;top:536.30px;font-size:25.2px;line-height:25.2px;font-weight:400;letter-spacing:1.622px;color:#ffffff">RUN REPORT</div>
<div class="t" style="left:2636.00px;top:660.20px;font-size:25.2px;line-height:25.2px;font-weight:400;letter-spacing:1.500px;color:#1a1a1a">Refresh</div>
<div class="t" style="left:39.60px;top:747.20px;font-size:24.6px;line-height:24.6px;font-weight:400;letter-spacing:0.820px;color:#727272;-webkit-text-stroke:0.75px #727272">Report Name</div>
<div class="t" style="left:639.30px;top:747.20px;font-size:24.6px;line-height:24.6px;font-weight:400;letter-spacing:0.700px;color:#727272;-webkit-text-stroke:0.75px #727272">Report Type</div>
<div class="t" style="left:1139.60px;top:747.20px;font-size:24.6px;line-height:24.6px;font-weight:400;letter-spacing:0.650px;color:#727272;-webkit-text-stroke:0.75px #727272">Date From</div>
<div class="t" style="left:1359.80px;top:747.20px;font-size:24.6px;line-height:24.6px;font-weight:400;letter-spacing:0.900px;color:#727272;-webkit-text-stroke:0.75px #727272">Date To</div>
<div class="t" style="left:1580.40px;top:747.20px;font-size:24.6px;line-height:24.6px;font-weight:400;letter-spacing:0.782px;color:#727272;-webkit-text-stroke:0.75px #727272">Created Date</div>
<div class="t" style="left:1799.80px;top:747.20px;font-size:24.6px;line-height:24.6px;font-weight:400;letter-spacing:0.622px;color:#727272;-webkit-text-stroke:0.75px #727272">Created By</div>
<div class="t" style="left:2199.80px;top:747.20px;font-size:24.6px;line-height:24.6px;font-weight:400;letter-spacing:0.800px;color:#727272;-webkit-text-stroke:0.75px #727272">Report Status</div>
<div class="t" style="left:1150.00px;top:811.80px;font-size:23.5px;line-height:23.5px;font-weight:400;letter-spacing:0.250px;color:#777777">mm/dd</div>
<div class="t" style="left:1370.20px;top:811.80px;font-size:23.5px;line-height:23.5px;font-weight:400;letter-spacing:0.250px;color:#777777">mm/dd</div>
<div class="t" style="left:1590.10px;top:811.80px;font-size:23.5px;line-height:23.5px;font-weight:400;letter-spacing:0.250px;color:#777777">mm/dd</div>
<div class="t" style="left:2812.70px;top:440.00px;font-size:31px;line-height:31px;font-weight:400;letter-spacing:-5.800px;color:#ffffff">PJ</div>
<div class="t" style="left:2812.70px;top:537.10px;font-size:31px;line-height:31px;font-weight:400;letter-spacing:-5.800px;color:#ffffff">PJ</div>
<div class="t" style="left:2806.50px;top:634.50px;font-size:31px;line-height:31px;font-weight:400;letter-spacing:-0.800px;color:#ffffff">JM</div>
<div class="t" style="left:2804.70px;top:731.70px;font-size:31px;line-height:31px;font-weight:400;letter-spacing:2.300px;color:#ffffff">AR</div>
<div class="t" style="left:2806.40px;top:828.40px;font-size:31px;line-height:31px;font-weight:400;letter-spacing:0.300px;color:#ffffff">BE</div>
<div class="t" style="left:2816.30px;top:926.20px;font-size:31px;line-height:31px;font-weight:400;letter-spacing:1.500px;color:#ffffff;transform:scaleX(0.62);transform-origin:0 0">JJ</div>
<div class="t" style="left:2804.70px;top:1023.40px;font-size:31px;line-height:31px;font-weight:400;letter-spacing:2.300px;color:#ffffff">AR</div>
<div class="t" style="left:2811.70px;top:1217.90px;font-size:31px;line-height:31px;font-weight:400;letter-spacing:-4.600px;color:#ffffff">PJ</div>
<div class="t" style="left:2794.80px;top:1107.60px;font-size:16.5px;line-height:16.5px;font-weight:400;letter-spacing:0.100px;color:#ffffff">AR</div>
<div class="t" style="left:2837.00px;top:1107.60px;font-size:16.5px;line-height:16.5px;font-weight:400;letter-spacing:-1.000px;color:#ffffff">BE</div>
<div class="t" style="left:2796.40px;top:1146.30px;font-size:16.5px;line-height:16.5px;font-weight:400;letter-spacing:-2.600px;color:#ffffff">JM</div>
<div class="t" style="left:2840.10px;top:1146.30px;font-size:16.5px;line-height:16.5px;font-weight:400;letter-spacing:-3.300px;color:#ffffff">PJ</div>
<div class="t" style="left:39.30px;top:872.30px;font-size:25px;line-height:25px;font-weight:400;letter-spacing:0.443px;color:#111;width:551.70px;overflow:hidden">Encounter Report_01/23/2023 13:35:58</div>
<div class="t" style="left:638.50px;top:872.30px;font-size:25px;line-height:25px;font-weight:400;letter-spacing:0.267px;color:#111">Encounter Report</div>
<div class="t" style="left:1178.40px;top:872.30px;font-size:25px;line-height:25px;font-weight:400;letter-spacing:1.044px;color:#111">01/16/2023</div>
<div class="t" style="left:1398.30px;top:872.30px;font-size:25px;line-height:25px;font-weight:400;letter-spacing:1.044px;color:#111">01/16/2023</div>
<div class="t" style="left:1618.20px;top:872.30px;font-size:25px;line-height:25px;font-weight:400;letter-spacing:1.044px;color:#111">01/23/2023</div>
<div class="t" style="left:1800.00px;top:872.30px;font-size:25px;line-height:25px;font-weight:400;letter-spacing:-0.327px;color:#111">Jones, Peter</div>
<div class="t" style="left:2200.00px;top:872.30px;font-size:25px;line-height:25px;font-weight:400;letter-spacing:0.325px;color:#111">Completed</div>
<div class="t" style="left:2500.30px;top:872.30px;font-size:25px;line-height:25px;font-weight:400;letter-spacing:0.610px;color:#4d9bd3;text-decoration:underline;text-decoration-thickness:2px;text-underline-offset:3px">View Report</div>
<div class="t" style="left:41.30px;top:928.30px;font-size:25px;line-height:25px;font-weight:400;letter-spacing:0.548px;color:#111;width:549.70px;overflow:hidden">Aging Report_01/23/2023 13:31:69</div>
<div class="t" style="left:640.50px;top:928.30px;font-size:25px;line-height:25px;font-weight:400;letter-spacing:0.491px;color:#111">Aging Report</div>
<div class="t" style="left:1398.30px;top:928.30px;font-size:25px;line-height:25px;font-weight:400;letter-spacing:1.044px;color:#111">01/23/2023</div>
<div class="t" style="left:1618.20px;top:928.30px;font-size:25px;line-height:25px;font-weight:400;letter-spacing:1.044px;color:#111">01/23/2023</div>
<div class="t" style="left:1800.00px;top:928.30px;font-size:25px;line-height:25px;font-weight:400;letter-spacing:-0.327px;color:#111">Jones, Peter</div>
<div class="t" style="left:2199.00px;top:928.30px;font-size:25px;line-height:25px;font-weight:400;letter-spacing:0.190px;color:#111">In Progress</div>
<div class="t" style="left:39.30px;top:984.30px;font-size:25px;line-height:25px;font-weight:400;letter-spacing:0.442px;color:#111;width:551.70px;overflow:hidden">Insurance Payment Report_01/02/2023 10:04:10</div>
<div class="t" style="left:638.50px;top:984.30px;font-size:25px;line-height:25px;font-weight:400;letter-spacing:0.374px;color:#111">Insurance Payment Report</div>
<div class="t" style="left:1178.40px;top:984.30px;font-size:25px;line-height:25px;font-weight:400;letter-spacing:1.044px;color:#111">09/01/2022</div>
<div class="t" style="left:1398.30px;top:984.30px;font-size:25px;line-height:25px;font-weight:400;letter-spacing:1.044px;color:#111">01/02/2023</div>
<div class="t" style="left:1618.20px;top:984.30px;font-size:25px;line-height:25px;font-weight:400;letter-spacing:1.044px;color:#111">01/02/2023</div>
<div class="t" style="left:1799.00px;top:984.30px;font-size:25px;line-height:25px;font-weight:400;letter-spacing:-0.138px;color:#111">Demo, Resource</div>
<div class="t" style="left:2200.00px;top:984.30px;font-size:25px;line-height:25px;font-weight:400;letter-spacing:0.325px;color:#111">Completed</div>
<div class="t" style="left:2500.30px;top:984.30px;font-size:25px;line-height:25px;font-weight:400;letter-spacing:0.610px;color:#4d9bd3;text-decoration:underline;text-decoration-thickness:2px;text-underline-offset:3px">View Report</div>
<div class="t" style="left:39.30px;top:1040.30px;font-size:25px;line-height:25px;font-weight:400;letter-spacing:0.488px;color:#111;width:551.70px;overflow:hidden">Insurance Payment Report_12/29/2022 11:25:54</div>
<div class="t" style="left:638.50px;top:1040.30px;font-size:25px;line-height:25px;font-weight:400;letter-spacing:0.374px;color:#111">Insurance Payment Report</div>
<div class="t" style="left:1176.40px;top:1040.30px;font-size:25px;line-height:25px;font-weight:400;letter-spacing:1.378px;color:#111">11/30/2022</div>
<div class="t" style="left:1397.30px;top:1040.30px;font-size:25px;line-height:25px;font-weight:400;letter-spacing:1.156px;color:#111">12/29/2022</div>
<div class="t" style="left:1617.20px;top:1040.30px;font-size:25px;line-height:25px;font-weight:400;letter-spacing:1.156px;color:#111">12/29/2022</div>
<div class="t" style="left:1800.00px;top:1040.30px;font-size:25px;line-height:25px;font-weight:400;letter-spacing:0.243px;color:#111">Specialities, Billing Company</div>
<div class="t" style="left:2200.00px;top:1040.30px;font-size:25px;line-height:25px;font-weight:400;letter-spacing:0.325px;color:#111">Completed</div>
<div class="t" style="left:2500.30px;top:1040.30px;font-size:25px;line-height:25px;font-weight:400;letter-spacing:0.610px;color:#4d9bd3;text-decoration:underline;text-decoration-thickness:2px;text-underline-offset:3px">View Report</div>
<div class="t" style="left:39.30px;top:1096.30px;font-size:25px;line-height:25px;font-weight:400;letter-spacing:0.443px;color:#111;width:551.70px;overflow:hidden">Encounter Report_12/15/2022 14:59:49</div>
<div class="t" style="left:638.50px;top:1096.30px;font-size:25px;line-height:25px;font-weight:400;letter-spacing:0.267px;color:#111">Encounter Report</div>
<div class="t" style="left:1178.40px;top:1096.30px;font-size:25px;line-height:25px;font-weight:400;letter-spacing:1.044px;color:#111">07/01/2022</div>
<div class="t" style="left:1398.30px;top:1096.30px;font-size:25px;line-height:25px;font-weight:400;letter-spacing:1.044px;color:#111">09/30/2022</div>
<div class="t" style="left:1617.20px;top:1096.30px;font-size:25px;line-height:25px;font-weight:400;letter-spacing:1.156px;color:#111">12/15/2022</div>
<div class="t" style="left:1800.00px;top:1096.30px;font-size:25px;line-height:25px;font-weight:400;letter-spacing:-0.327px;color:#111">Jones, Peter</div>
<div class="t" style="left:2200.00px;top:1096.30px;font-size:25px;line-height:25px;font-weight:400;letter-spacing:0.325px;color:#111">Completed</div>
<div class="t" style="left:2500.30px;top:1096.30px;font-size:25px;line-height:25px;font-weight:400;letter-spacing:0.610px;color:#4d9bd3;text-decoration:underline;text-decoration-thickness:2px;text-underline-offset:3px">View Report</div>
<div class="t" style="left:39.30px;top:1152.30px;font-size:25px;line-height:25px;font-weight:400;letter-spacing:0.443px;color:#111;width:551.70px;overflow:hidden">Encounter Report_12/14/2022 09:15:03</div>
<div class="t" style="left:638.50px;top:1152.30px;font-size:25px;line-height:25px;font-weight:400;letter-spacing:0.267px;color:#111">Encounter Report</div>
<div class="t" style="left:1176.40px;top:1152.30px;font-size:25px;line-height:25px;font-weight:400;letter-spacing:1.378px;color:#111">11/15/2022</div>
<div class="t" style="left:1397.30px;top:1152.30px;font-size:25px;line-height:25px;font-weight:400;letter-spacing:1.156px;color:#111">12/14/2022</div>
<div class="t" style="left:1617.20px;top:1152.30px;font-size:25px;line-height:25px;font-weight:400;letter-spacing:1.156px;color:#111">12/14/2022</div>
<div class="t" style="left:1800.00px;top:1152.30px;font-size:25px;line-height:25px;font-weight:400;letter-spacing:-0.327px;color:#111">Jones, Peter</div>
<div class="t" style="left:2200.00px;top:1152.30px;font-size:25px;line-height:25px;font-weight:400;letter-spacing:0.325px;color:#111">Completed</div>
<div class="t" style="left:2500.30px;top:1152.30px;font-size:25px;line-height:25px;font-weight:400;letter-spacing:0.610px;color:#4d9bd3;text-decoration:underline;text-decoration-thickness:2px;text-underline-offset:3px">View Report</div>
<div class="t" style="left:41.30px;top:1208.30px;font-size:25px;line-height:25px;font-weight:400;letter-spacing:0.548px;color:#111;width:549.70px;overflow:hidden">Aging Report_12/09/2022 15:05:80</div>
<div class="t" style="left:640.50px;top:1208.30px;font-size:25px;line-height:25px;font-weight:400;letter-spacing:0.491px;color:#111">Aging Report</div>
<div class="t" style="left:1397.30px;top:1208.30px;font-size:25px;line-height:25px;font-weight:400;letter-spacing:1.156px;color:#111">12/09/2022</div>
<div class="t" style="left:1617.20px;top:1208.30px;font-size:25px;line-height:25px;font-weight:400;letter-spacing:1.156px;color:#111">12/09/2022</div>
<div class="t" style="left:1800.00px;top:1208.30px;font-size:25px;line-height:25px;font-weight:400;letter-spacing:-0.327px;color:#111">Jones, Peter</div>
<div class="t" style="left:2200.00px;top:1208.30px;font-size:25px;line-height:25px;font-weight:400;letter-spacing:0.325px;color:#111">Completed</div>
<div class="t" style="left:2500.30px;top:1208.30px;font-size:25px;line-height:25px;font-weight:400;letter-spacing:0.610px;color:#4d9bd3;text-decoration:underline;text-decoration-thickness:2px;text-underline-offset:3px">View Report</div>
<div class="t" style="left:39.30px;top:1264.30px;font-size:25px;line-height:25px;font-weight:400;letter-spacing:0.414px;color:#111;width:551.70px;overflow:hidden">Encounter Report_12/07/2022 12:06:34</div>
<div class="t" style="left:638.50px;top:1264.30px;font-size:25px;line-height:25px;font-weight:400;letter-spacing:0.267px;color:#111">Encounter Report</div>
<div class="t" style="left:1176.40px;top:1264.30px;font-size:25px;line-height:25px;font-weight:400;letter-spacing:1.378px;color:#111">11/08/2022</div>
<div class="t" style="left:1397.30px;top:1264.30px;font-size:25px;line-height:25px;font-weight:400;letter-spacing:1.156px;color:#111">12/07/2022</div>
<div class="t" style="left:1617.20px;top:1264.30px;font-size:25px;line-height:25px;font-weight:400;letter-spacing:1.156px;color:#111">12/07/2022</div>
<div class="t" style="left:1800.00px;top:1264.30px;font-size:25px;line-height:25px;font-weight:400;letter-spacing:-0.327px;color:#111">Jones, Peter</div>
<div class="t" style="left:2200.00px;top:1264.30px;font-size:25px;line-height:25px;font-weight:400;letter-spacing:0.325px;color:#111">Completed</div>
<div class="t" style="left:2500.30px;top:1264.30px;font-size:25px;line-height:25px;font-weight:400;letter-spacing:0.610px;color:#4d9bd3;text-decoration:underline;text-decoration-thickness:2px;text-underline-offset:3px">View Report</div>
<div class="t" style="left:39.30px;top:1320.30px;font-size:25px;line-height:25px;font-weight:400;letter-spacing:0.709px;color:#111;width:551.70px;overflow:hidden">Patient Report_11/21/2022 11:53:11</div>
<div class="t" style="left:638.50px;top:1320.30px;font-size:25px;line-height:25px;font-weight:400;letter-spacing:0.600px;color:#111">Patient Report</div>
<div class="t" style="left:1177.40px;top:1320.30px;font-size:25px;line-height:25px;font-weight:400;letter-spacing:1.156px;color:#111">10/22/2022</div>
<div class="t" style="left:1396.30px;top:1320.30px;font-size:25px;line-height:25px;font-weight:400;letter-spacing:1.378px;color:#111">11/21/2022</div>
<div class="t" style="left:1616.20px;top:1320.30px;font-size:25px;line-height:25px;font-weight:400;letter-spacing:1.378px;color:#111">11/21/2022</div>
<div class="t" style="left:1800.00px;top:1320.30px;font-size:25px;line-height:25px;font-weight:400;letter-spacing:-0.327px;color:#111">Jones, Peter</div>
<div class="t" style="left:2200.00px;top:1320.30px;font-size:25px;line-height:25px;font-weight:400;letter-spacing:0.325px;color:#111">Completed</div>
<div class="t" style="left:2500.30px;top:1320.30px;font-size:25px;line-height:25px;font-weight:400;letter-spacing:0.610px;color:#4d9bd3;text-decoration:underline;text-decoration-thickness:2px;text-underline-offset:3px">View Report</div>
<div class="t" style="left:39.30px;top:1376.30px;font-size:25px;line-height:25px;font-weight:400;letter-spacing:0.566px;color:#111;width:551.70px;overflow:hidden">Patient Payment Report_11/17/2022 17:42:76</div>
<div class="t" style="left:638.50px;top:1376.30px;font-size:25px;line-height:25px;font-weight:400;letter-spacing:0.548px;color:#111">Patient Payment Report</div>
<div class="t" style="left:1177.40px;top:1376.30px;font-size:25px;line-height:25px;font-weight:400;letter-spacing:1.156px;color:#111">10/31/2022</div>
<div class="t" style="left:1396.30px;top:1376.30px;font-size:25px;line-height:25px;font-weight:400;letter-spacing:1.378px;color:#111">11/10/2022</div>
<div class="t" style="left:1616.20px;top:1376.30px;font-size:25px;line-height:25px;font-weight:400;letter-spacing:1.378px;color:#111">11/17/2022</div>
<div class="t" style="left:1800.00px;top:1376.30px;font-size:25px;line-height:25px;font-weight:400;letter-spacing:-0.327px;color:#111">Jones, Peter</div>
<div class="t" style="left:2200.00px;top:1376.30px;font-size:25px;line-height:25px;font-weight:400;letter-spacing:0.325px;color:#111">Completed</div>
<div class="t" style="left:2500.30px;top:1376.30px;font-size:25px;line-height:25px;font-weight:400;letter-spacing:0.610px;color:#4d9bd3;text-decoration:underline;text-decoration-thickness:2px;text-underline-offset:3px">View Report</div>
<div class="t" style="left:39.30px;top:1432.30px;font-size:25px;line-height:25px;font-weight:400;letter-spacing:0.500px;color:#111;width:551.70px;overflow:hidden">Encounter Report_11/17/2022 14:20:81</div>
<div class="t" style="left:638.50px;top:1432.30px;font-size:25px;line-height:25px;font-weight:400;letter-spacing:0.267px;color:#111">Encounter Report</div>
<div class="t" style="left:1177.40px;top:1432.30px;font-size:25px;line-height:25px;font-weight:400;letter-spacing:1.156px;color:#111">10/18/2022</div>
<div class="t" style="left:1396.30px;top:1432.30px;font-size:25px;line-height:25px;font-weight:400;letter-spacing:1.378px;color:#111">11/17/2022</div>
<div class="t" style="left:1616.20px;top:1432.30px;font-size:25px;line-height:25px;font-weight:400;letter-spacing:1.378px;color:#111">11/17/2022</div>
<div class="t" style="left:1799.00px;top:1432.30px;font-size:25px;line-height:25px;font-weight:400;letter-spacing:-0.138px;color:#111">Demo, Resource</div>
<div class="t" style="left:2200.00px;top:1432.30px;font-size:25px;line-height:25px;font-weight:400;letter-spacing:0.325px;color:#111">Completed</div>
<div class="t" style="left:2500.30px;top:1432.30px;font-size:25px;line-height:25px;font-weight:400;letter-spacing:0.610px;color:#4d9bd3;text-decoration:underline;text-decoration-thickness:2px;text-underline-offset:3px">View Report</div>
<div class="t" style="left:39.30px;top:1488.30px;font-size:25px;line-height:25px;font-weight:400;letter-spacing:0.488px;color:#111;width:551.70px;overflow:hidden">Insurance Payment Report_11/16/2022 13:22:64</div>
<div class="t" style="left:638.50px;top:1488.30px;font-size:25px;line-height:25px;font-weight:400;letter-spacing:0.374px;color:#111">Insurance Payment Report</div>
<div class="t" style="left:1177.40px;top:1488.30px;font-size:25px;line-height:25px;font-weight:400;letter-spacing:1.044px;color:#111">10/01/2014</div>
<div class="t" style="left:1396.30px;top:1488.30px;font-size:25px;line-height:25px;font-weight:400;letter-spacing:1.378px;color:#111">11/16/2022</div>
<div class="t" style="left:1616.20px;top:1488.30px;font-size:25px;line-height:25px;font-weight:400;letter-spacing:1.378px;color:#111">11/16/2022</div>
<div class="t" style="left:1799.00px;top:1488.30px;font-size:25px;line-height:25px;font-weight:400;letter-spacing:-0.267px;color:#111">Mayes, Jim</div>
<div class="t" style="left:2200.00px;top:1488.30px;font-size:25px;line-height:25px;font-weight:400;letter-spacing:0.325px;color:#111">Completed</div>
<div class="t" style="left:2500.30px;top:1488.30px;font-size:25px;line-height:25px;font-weight:400;letter-spacing:0.610px;color:#4d9bd3;text-decoration:underline;text-decoration-thickness:2px;text-underline-offset:3px">View Report</div>
</body></html>
